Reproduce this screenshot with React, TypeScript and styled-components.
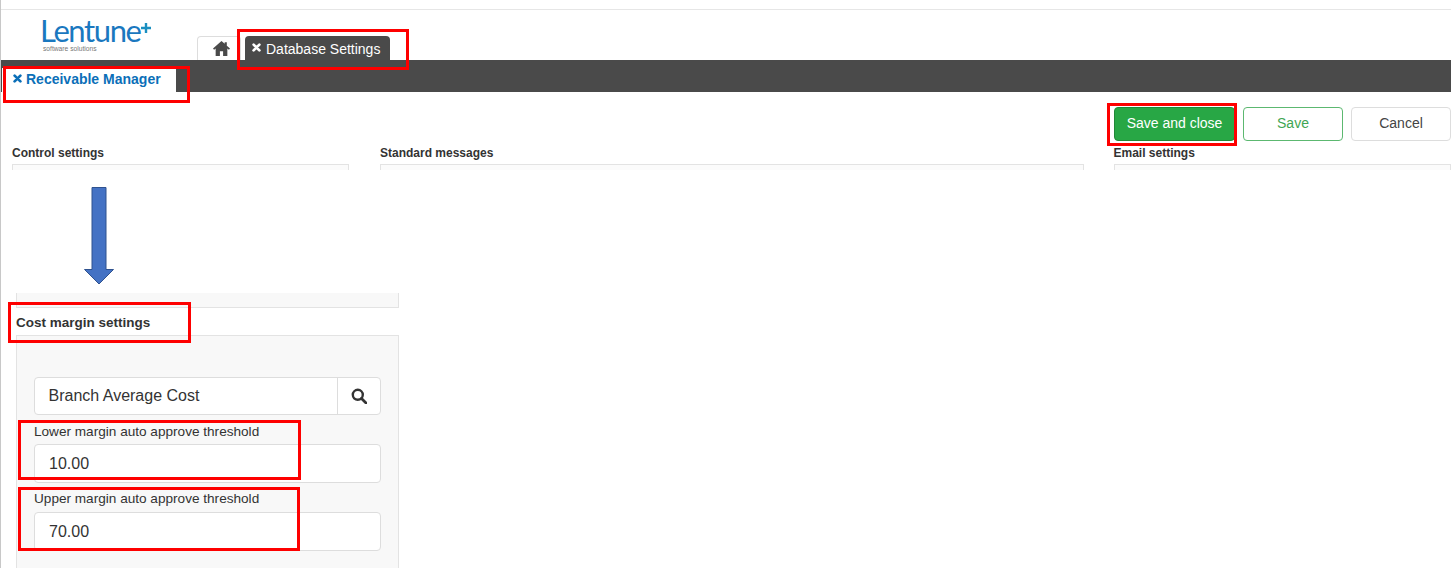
import React from "react";
import styled, { createGlobalStyle } from "styled-components";

const Global = createGlobalStyle`
  html, body { margin: 0; padding: 0; background: #fff; }
  body { font-family: "Liberation Sans", Arial, sans-serif; color: #333; }
  * { box-sizing: border-box; }
`;

const Page = styled.div`
  position: relative;
  width: 1451px;
  height: 568px;
  overflow: hidden;
  background: #fff;
  border-left: 1px solid #c8c8c8;
`;

const Header = styled.header`
  margin-top: 9px;
  border-top: 1px solid #e6e6e6;
  display: flex;
  align-items: flex-end;
  height: 51px;
  padding-left: 39px;
`;

const Logo = styled.div`
  width: 157px;
  align-self: flex-start;
  padding-top: 6px;
  display: flex;
  flex-direction: column;
  position: relative;
`;

const LogoName = styled.div`
  font-family: "Lato", "Open Sans", sans-serif;
  font-weight: 400;
  font-size: 31px;
  line-height: 29px;
  height: 29px;
  letter-spacing: -1.4px;
  color: #1a78bf;
`;

const LogoPlus = styled.span`
  position: absolute;
  left: 101px;
  top: 9px;
  width: 10px;
  height: 10px;
  color: #1a8fc0;
`;

const LogoTag = styled.div`
  font-size: 6.7px;
  line-height: 7px;
  padding-left: 3px;
  color: #777;
`;

const HomeTab = styled.div`
  width: 44px;
  height: 24px;
  background: #fff;
  border: 1px solid #ddd;
  border-bottom: 0;
  border-radius: 4px 4px 0 0;
  display: flex;
  align-items: center;
  justify-content: center;
  padding-left: 4px;
  color: #4a4a4a;
`;

const DarkTab = styled.div`
  margin-left: 4px;
  width: 145px;
  height: 24px;
  background: #4a4a4a;
  border-radius: 4px 4px 0 0;
  color: #fff;
  font-size: 14px;
  display: flex;
  align-items: center;
  gap: 5px;
  padding: 2px 0 0 7px;
  svg { margin-top: -3px; }
`;

const CloseIcon = styled.svg`
  width: 9px;
  height: 9px;
  flex: none;
`;

const SubBar = styled.nav`
  height: 32px;
  background: #4a4a4a;
  padding: 8px 0 0 1px;
  display: flex;
`;

const ActiveTab = styled.div`
  width: 174px;
  height: 24px;
  background: #fff;
  color: #0b6fb8;
  font-size: 14px;
  font-weight: bold;
  display: flex;
  align-items: flex-start;
  gap: 4px;
  padding: 3px 0 0 11px;
  line-height: 17px;
  svg { margin-top: 3px; }
`;

const Toolbar = styled.div`
  display: flex;
  justify-content: flex-end;
  gap: 8px;
  padding-top: 15px;
  height: 49px;
`;

const Button = styled.button<{ $kind: "primary" | "outline" | "plain" }>`
  height: 34px;
  width: ${(p) => (p.$kind === "primary" ? "121px" : "100px")};
  font-family: inherit;
  font-size: 14px;
  border-radius: 4px;
  border: 1px solid
    ${(p) => (p.$kind === "primary" ? "#218838" : p.$kind === "outline" ? "#5cb870" : "#ddd")};
  background: ${(p) => (p.$kind === "primary" ? "#28a745" : "#fff")};
  color: ${(p) => (p.$kind === "primary" ? "#fff" : p.$kind === "outline" ? "#3fa653" : "#444")};
  padding: 0 0 2px;
`;

const Columns = styled.div`
  display: grid;
  grid-template-columns: 368px 733.5px 337px;
  padding-left: 11px;
  height: 29px;
`;

const ColumnTitle = styled.div`
  font-size: 12px;
  font-weight: bold;
  line-height: 14px;
  padding-top: 5px;
  height: 23px;
  color: #333;
`;

const PanelTop = styled.div<{ $w: number }>`
  width: ${(p) => p.$w}px;
  height: 6px;
  background: #fbfbfb;
  border: 1px solid #e3e3e3;
  border-bottom: 0;
`;

const Lower = styled.section`
  margin-top: 123px;
  margin-left: 15px;
  width: 383px;
`;

const PanelEnd = styled.div`
  height: 15px;
  background: #f8f8f8;
  border: 1px solid #e3e3e3;
  border-top: 0;
`;

const SectionTitle = styled.div`
  font-size: 13.5px;
  font-weight: bold;
  line-height: 15px;
  height: 27px;
  padding-top: 7px;
  color: #333;
`;

const Panel = styled.div`
  background: #f8f8f8;
  border: 1px solid #e3e3e3;
  padding: 41px 17px 30px;
  height: 260px;
`;

const Group = styled.div`
  display: flex;
  height: 38px;
  background: #fff;
  border: 1px solid #ddd;
  border-radius: 4px;
`;

const FieldText = styled.div`
  flex: 1;
  font-size: 16px;
  line-height: 36px;
  padding-left: 13.5px;
  color: #333;
`;

const SearchAddon = styled.div`
  width: 43px;
  border-left: 1px solid #ddd;
  display: flex;
  align-items: center;
  justify-content: center;
  color: #333;
`;

const Label = styled.div<{ $top: number }>`
  font-size: 13.6px;
  line-height: 15px;
  margin-top: ${(p) => p.$top}px;
  height: ${(p) => 29 - p.$top}px;
  color: #333;
`;

const Input = styled.div`
  height: 39px;
  background: #fff;
  border: 1px solid #ddd;
  border-radius: 4px;
  font-size: 16px;
  line-height: 37px;
  padding-left: 14px;
  color: #333;
`;

const Mark = styled.div<{ $x: number; $y: number; $w: number; $h: number }>`
  position: absolute;
  left: ${(p) => p.$x - 1}px;
  top: ${(p) => p.$y}px;
  width: ${(p) => p.$w}px;
  height: ${(p) => p.$h}px;
  border: 3px solid #fe0000;
  pointer-events: none;
`;

const Arrow = styled.svg`
  position: absolute;
  left: 82px;
  top: 187px;
`;

const Close = () => (
  <CloseIcon viewBox="0 0 10 10">
    <path d="M1.800 1.800 8.200 8.200M8.200 1.800 1.800 8.200" stroke="currentColor" strokeWidth="3" strokeLinecap="round" />
  </CloseIcon>
);

export default function App() {
  return (
    <Page>
      <Global />
      <Header>
        <Logo>
          <LogoName>Lentune</LogoName>
          <LogoPlus>
            <svg width="10" height="10" viewBox="0 0 10 10">
              <path d="M3.800 0h2.400v3.800H10v2.400H6.200V10H3.800V6.200H0V3.800h3.800z" fill="currentColor" />
            </svg>
          </LogoPlus>
          <LogoTag>software solutions</LogoTag>
        </Logo>
        <HomeTab>
          <svg width="17" height="15" viewBox="0 0 16 14">
            <path d="M8 0 0 7l1 1.200L2.500 7v7h4V9.500h3V14h4V7L15 8.200 16 7l-3-2.600V1h-2v1.600z" fill="currentColor" />
          </svg>
        </HomeTab>
        <DarkTab>
          <Close />
          Database Settings
        </DarkTab>
      </Header>
      <SubBar>
        <ActiveTab>
          <Close />
          Receivable Manager
        </ActiveTab>
      </SubBar>
      <Toolbar>
        <Button $kind="primary">Save and close</Button>
        <Button $kind="outline">Save</Button>
        <Button $kind="plain">Cancel</Button>
      </Toolbar>
      <Columns>
        <div>
          <ColumnTitle>Control settings</ColumnTitle>
          <PanelTop $w={337} />
        </div>
        <div>
          <ColumnTitle>Standard messages</ColumnTitle>
          <PanelTop $w={704} />
        </div>
        <div>
          <ColumnTitle>Email settings</ColumnTitle>
          <PanelTop $w={337} />
        </div>
      </Columns>
      <Lower>
        <PanelEnd />
        <SectionTitle>Cost margin settings</SectionTitle>
        <Panel>
          <Group>
            <FieldText>Branch Average Cost</FieldText>
            <SearchAddon>
              <svg width="16" height="16" viewBox="0 0 16 16" fill="none">
                <circle cx="6.800" cy="6.800" r="5" stroke="currentColor" strokeWidth="2.400" />
                <path d="M10.500 10.500 15 15" stroke="currentColor" strokeWidth="2.800" strokeLinecap="round" />
              </svg>
            </SearchAddon>
          </Group>
          <Label $top={9}>Lower margin auto approve threshold</Label>
          <Input>10.00</Input>
          <Label $top={8}>Upper margin auto approve threshold</Label>
          <Input>70.00</Input>
        </Panel>
      </Lower>

      <Arrow width="32" height="98" viewBox="0 0 32 98">
        <path d="M9 .5h14v82h7.500L16 97 1.500 82.500H9z" fill="#4472c4" stroke="#2f528f" strokeWidth="1" />
      </Arrow>
      <Mark $x={237} $y={29} $w={172} $h={41} />
      <Mark $x={3} $y={66} $w={187} $h={37} />
      <Mark $x={1107} $y={103} $w={130} $h={43} />
      <Mark $x={8} $y={302} $w={183} $h={41} />
      <Mark $x={18} $y={420} $w={283} $h={60} />
      <Mark $x={18} $y={487} $w={282} $h={64} />
    </Page>
  );
}
